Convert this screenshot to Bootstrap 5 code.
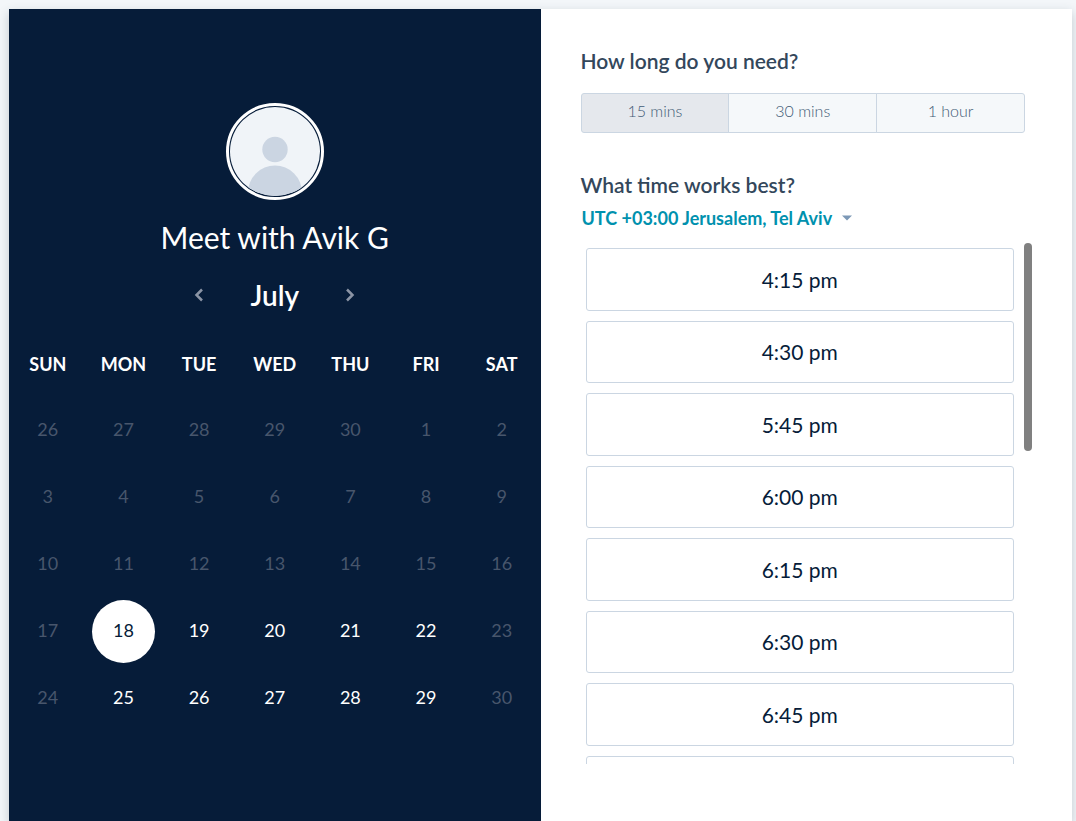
<!DOCTYPE html>
<html lang="en">
<head>
<meta charset="utf-8">
<meta name="viewport" content="width=device-width, initial-scale=1">
<title>Meet with Avik G</title>
<link href="https://cdn.jsdelivr.net/npm/bootstrap@5.3.0/dist/css/bootstrap.min.css" rel="stylesheet">
<style>
  body { font-family: Lato, "Liberation Sans", sans-serif; background: #f3f6f9; color: #33475b; }
  .page { padding: 9px 4px 0 9px; }
  .booking { background: #fff; box-shadow: 0 4px 10px rgba(45, 62, 80, .25); }
  .date-pane { background: #061c39; color: #fff; padding-top: 94px; }
  .time-pane { padding: 40px 40px 0; }
  .avatar { width: 98px; height: 97px; }
  .meet-title { font-size: 30px; line-height: 40px; margin-top: 17px; font-weight: 400; }
  .month-bar { height: 40px; margin-top: 18px; gap: 43px; }
  .month-name { font-size: 28px; line-height: 40px; font-weight: 600; }
  .month-step { width: 16px; height: 24px; }
  .calendar-wrap { padding: 0 1px; margin-top: 16px; }
  .calendar { table-layout: fixed; text-align: center; font-size: 18px; line-height: 24px; }
  .calendar th { height: 66px; font-weight: 700; }
  .calendar td { height: 67px; }
  .day { width: 63px; height: 63px; color: #fff; font-size: 18px; font-weight: 400; padding: 0 0 2px; }
  .day:disabled { color: #48566c; opacity: 1; }
  .day.chosen { background: #fff; color: #061c39; }
  .question { font-size: 21px; line-height: 24px; font-weight: 600; }
  .durations { margin: 20px 7px 40px 0; height: 40px; }
  .durations .btn { font-size: 16px; line-height: 22px; font-weight: 300; color: #425b76;
    background: #f5f8fa; border: 1px solid #cbd6e2; border-radius: 3px; }
  .durations .btn-check:checked + .btn { background: #e5e8ed; color: #425b76; border-color: #cbd6e2; }
  .zone { color: #0091ae; font-size: 18px; line-height: 24px; font-weight: 700; gap: 10px; margin: 9px 0 0 1px; }
  .slot-view { height: 521px; margin-top: 13px; gap: 5px; }
  .slot-list { height: 580px; padding: 5px; gap: 10px; }
  .slot { flex: 1 1 0; background: #fff; border: 1px solid #cbd6e2; border-radius: 3px; color: #061c39; font-size: 21px; font-weight: 400; }
  .scroll-thumb { width: 8px; height: 208px; background: #808080; }
</style>
</head>
<body>
<div class="page vh-100 d-flex overflow-hidden">
  <main class="booking row g-0 flex-fill">
    <section class="date-pane col-6 d-flex flex-column align-items-center">
      <svg class="avatar" viewBox="0 0 98 97" preserveAspectRatio="none" role="img" aria-label="Avik G">
        <defs><clipPath id="face"><ellipse cx="49" cy="48.5" rx="45" ry="44.5"/></clipPath></defs>
        <ellipse cx="49" cy="48.5" rx="47.5" ry="47" fill="#061c39" stroke="#fff" stroke-width="3"/>
        <g clip-path="url(#face)">
          <rect width="98" height="98" fill="#f0f4f8"/>
          <circle cx="49" cy="46.5" r="12.7" fill="#cbd5e2"/>
          <circle cx="49" cy="89.500" r="27" fill="#cbd5e2"/>
        </g>
      </svg>
      <h1 class="meet-title mb-0">Meet with Avik G</h1>
      <div class="month-bar d-flex align-items-center">
        <button class="month-step btn border-0 p-0 d-flex align-items-center justify-content-center" type="button" aria-label="Previous month">
          <svg width="10" height="14" viewBox="0 0 10 14" fill="none" stroke="#8b94a5" stroke-width="2.5"><path d="M8 1.5 2.5 7 8 12.5"/></svg>
        </button>
        <h2 class="month-name mb-0">July</h2>
        <button class="month-step btn border-0 p-0 d-flex align-items-center justify-content-center" type="button" aria-label="Next month">
          <svg width="10" height="14" viewBox="0 0 10 14" fill="none" stroke="#8b94a5" stroke-width="2.5"><path d="M2 1.5 7.5 7 2 12.5"/></svg>
        </button>
      </div>
      <div class="calendar-wrap w-100">
        <table class="calendar w-100">
          <thead><tr><th>SUN</th><th>MON</th><th>TUE</th><th>WED</th><th>THU</th><th>FRI</th><th>SAT</th></tr></thead>
          <tbody id="days"></tbody>
        </table>
      </div>
    </section>
    <section class="time-pane col-6">
      <h2 class="question mb-0" id="length-label">How long do you need?</h2>
      <div class="durations btn-group d-flex" role="group" aria-labelledby="length-label">
        <input class="btn-check" type="radio" name="length" id="len15" checked>
        <label class="btn w-100" for="len15">15 mins</label>
        <input class="btn-check" type="radio" name="length" id="len30">
        <label class="btn w-100" for="len30">30 mins</label>
        <input class="btn-check" type="radio" name="length" id="len60">
        <label class="btn w-100" for="len60">1 hour</label>
      </div>
      <h2 class="question mb-0">What time works best?</h2>
      <button class="zone btn border-0 p-0 d-flex align-items-center" type="button">UTC +03:00 Jerusalem, Tel Aviv
        <svg width="10" height="6" viewBox="0 0 10 6"><path d="M0 .5h10L5 5.5z" fill="#7c98b6"/></svg>
      </button>
      <div class="slot-view d-flex overflow-hidden">
        <div class="slot-list d-flex flex-column flex-fill" id="slots"></div>
        <div class="scroll-thumb rounded-pill"></div>
      </div>
    </section>
  </main>
</div>
<script src="https://cdn.jsdelivr.net/npm/bootstrap@5.3.0/dist/js/bootstrap.bundle.min.js"></script>
<script>
  const weeks = [
    [26, 27, 28, 29, 30, 1, 2],
    [3, 4, 5, 6, 7, 8, 9],
    [10, 11, 12, 13, 14, 15, 16],
    [17, 18, 19, 20, 21, 22, 23],
    [24, 25, 26, 27, 28, 29, 30]
  ];
  const isOpen = (week, weekday) => week >= 3 && weekday > 0 && weekday < 6;
  document.getElementById('days').innerHTML = weeks.map((days, w) =>
    '<tr>' + days.map((d, i) => {
      const chosen = w === 3 && d === 18 ? ' chosen' : '';
      return `<td><button type="button" class="day btn border-0 rounded-circle${chosen}"${isOpen(w, i) ? '' : ' disabled'}>${d}</button></td>`;
    }).join('') + '</tr>').join('');

  const times = ['4:15 pm', '4:30 pm', '5:45 pm', '6:00 pm', '6:15 pm', '6:30 pm', '6:45 pm'];
  document.getElementById('slots').innerHTML =
    times.map(t => `<button type="button" class="slot">${t}</button>`).join('') +
    '<button type="button" class="slot" aria-label="Later time"></button>';
</script>
</body>
</html>
